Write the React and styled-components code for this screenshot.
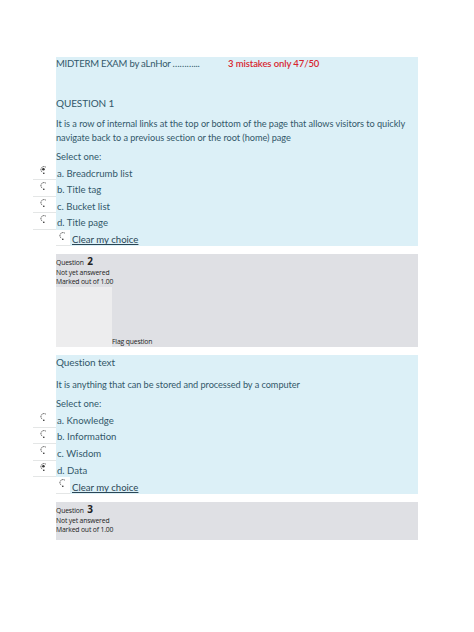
import React from 'react';
import styled, { createGlobalStyle } from 'styled-components';

const GlobalStyle = createGlobalStyle`
    body {
        margin: 0;
        background: #ffffff;
        font-family: Lato, "Liberation Sans", sans-serif;
    }
`;

const Page = styled.div`
    width: 474px;
    height: 632px;
    padding: 57px 0 0 56px;
    box-sizing: border-box;
    display: flex;
    flex-flow: column;
`;

const Panel = styled.div`
    width: 362px;
    background: ${props => props.$gray ? '#dfe0e4' : '#dcf0f7'};
    margin-bottom: ${props => props.$gap || 8}px;
    display: flex;
    flex-flow: column;
    color: #33586a;
`;

const HeaderRow = styled.div`
    display: flex;
    font-size: 9.5px;
    line-height: 14px;
    height: 14px;
`;

const Title = styled.span`
    width: 172px;
    letter-spacing: -0.2px;
`;

const Mistakes = styled.span`
    color: #d8262f;
    font-weight: 600;
    letter-spacing: -0.1px;
`;

const Heading = styled.div`
    font-size: 10px;
    line-height: 14px;
    margin-top: ${props => props.$top || 0}px;
    letter-spacing: -0.1px;
`;

const Body = styled.p`
    margin: ${props => props.$top || 7}px 0 0;
    font-size: 9.2px;
    line-height: 14px;
    letter-spacing: -0.05px;
`;

const Select = styled.div`
    font-size: 9.4px;
    line-height: 14px;
    margin-top: 5px;
`;

const Option = styled.div`
    display: flex;
    align-items: center;
    height: 16.7px;
    margin-left: ${props => props.$inset ? 0 : -23}px;
    font-size: 9.6px;
`;

const RadioCell = styled.div`
    width: ${props => props.$inset ? 14 : 23}px;
    height: 100%;
    background: #ffffff;
    border-bottom: 1px solid #e4e6e6;
    box-sizing: border-box;
    display: flex;
    align-items: flex-start;
    justify-content: ${props => props.$inset ? 'flex-start' : 'flex-end'};
    padding: 1px ${props => props.$inset ? 0 : 8}px 0 ${props => props.$inset ? 2 : 0}px;
    margin-right: ${props => props.$inset ? 2 : 1}px;
`;

const Label = styled.span`
    margin-top: 2px;
`;

const Clear = styled.a`
    color: #2a4656;
    text-decoration: underline;
    font-size: 9.6px;
    margin-top: 4px;
`;

const Info = styled.div`
    display: flex;
    flex-flow: column;
    color: #222;
    font-family: "Open Sans", Lato, sans-serif;
    font-size: 6.8px;
    line-height: 9.5px;
    padding-top: 3px;
    letter-spacing: -0.15px;
`;

const QNum = styled.b`
    font-size: 10px;
    font-weight: 700;
    margin-left: 2px;
`;

const FlagArea = styled.div`
    display: flex;
    flex: 1;
`;

const FlagSide = styled.div`
    width: 56px;
    background: #ededee;
`;

const Flag = styled.div`
    align-self: flex-end;
    font-family: "Open Sans", Lato, sans-serif;
    font-size: 6.8px;
    line-height: 8px;
    color: #222;
    letter-spacing: -0.15px;
    padding-bottom: 1px;
`;

const Radio = ({ checked }) => (
    <svg width="9" height="10" viewBox="0 0 8 10">
        <path d="M6.3 2.2 A3 3 0 1 0 2.6 7" fill="none" stroke="#555" strokeWidth="1" strokeDasharray="1.4 0.6" />
        <circle cx="4.3" cy="8.2" r="0.8" fill="#222" />
        {checked && <circle cx="3.9" cy="4.2" r="1.3" fill="#333" />}
    </svg>
);

const Choices = ({ items, picked }) => (
    <>
        {items.map((item, i) => (
            <Option key={item}>
                <RadioCell>
                    <Radio checked={i === picked} />
                </RadioCell>
                <Label>{item}</Label>
            </Option>
        ))}
        <Option $inset>
            <RadioCell $inset>
                <Radio />
            </RadioCell>
            <Clear>Clear my choice</Clear>
        </Option>
    </>
);

const Status = ({ num }) => (
    <Info>
        <span>Question <QNum>{num}</QNum></span>
        <span>Not yet answered</span>
        <span>Marked out of 1.00</span>
    </Info>
);

const App = () => (
    <>
        <GlobalStyle />
        <Page>
            <Panel style={{ height: 189 }}>
                <HeaderRow>
                    <Title>MIDTERM EXAM by aLnHor ………...</Title>
                    <Mistakes>3 mistakes only 47/50</Mistakes>
                </HeaderRow>
                <Heading $top={25}>QUESTION 1</Heading>
                <Body>
                    It is a row of internal links at the top or bottom of the page that allows visitors to quickly navigate back to a previous section or the root (home) page
                </Body>
                <Select>Select one:</Select>
                <Choices items={['a. Breadcrumb list', 'b. Title tag', 'c. Bucket list', 'd. Title page']} picked={0} />
            </Panel>
            <Panel $gray style={{ height: 93 }}>
                <Status num="2" />
                <FlagArea>
                    <FlagSide />
                    <Flag>Flag question</Flag>
                </FlagArea>
            </Panel>
            <Panel style={{ height: 139 }}>
                <Heading $top={0}>Question text</Heading>
                <Body $top={9}>It is anything that can be stored and processed by a computer</Body>
                <Select>Select one:</Select>
                <Choices items={['a. Knowledge', 'b. Information', 'c. Wisdom', 'd. Data']} picked={3} />
            </Panel>
            <Panel $gray style={{ height: 38 }}>
                <Status num="3" />
            </Panel>
        </Page>
    </>
);

export default App;
